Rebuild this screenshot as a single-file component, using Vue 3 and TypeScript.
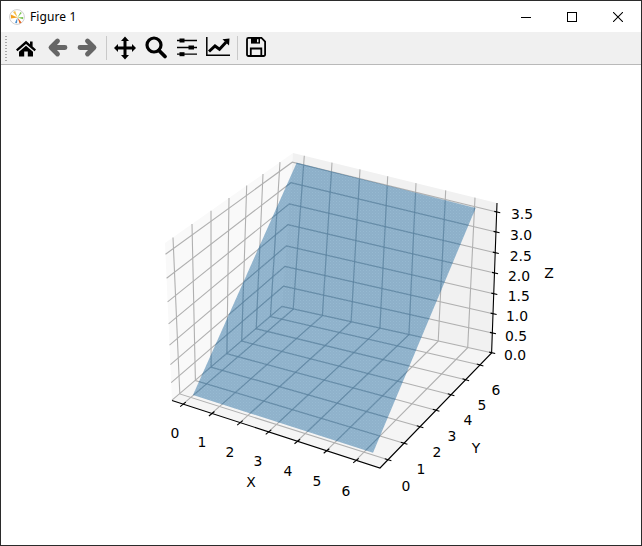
<script setup lang="ts">
type P = [number, number];
type Quad = [P, P, P, P];

// Projective map of the unit square onto a quad (corners: 00, 10, 11, 01).
function homography(q: Quad) {
  const [[x0, y0], [x1, y1], [x2, y2], [x3, y3]] = q;
  const dx1 = x1 - x2, dx2 = x3 - x2, sx = x0 - x1 + x2 - x3;
  const dy1 = y1 - y2, dy2 = y3 - y2, sy = y0 - y1 + y2 - y3;
  const den = dx1 * dy2 - dx2 * dy1;
  const g = (sx * dy2 - dx2 * sy) / den;
  const h = (dx1 * sy - sx * dy1) / den;
  return (u: number, v: number): P => {
    const w = g * u + h * v + 1;
    return [
      ((x1 - x0 + g * x1) * u + (x3 - x0 + h * x3) * v + x0) / w,
      ((y1 - y0 + g * y1) * u + (y3 - y0 + h * y3) * v + y0) / w,
    ];
  };
}

// Parameter along an edge whose chosen coordinate reaches the measured value.
function solve(fn: (t: number) => number, target: number) {
  let lo = 0, hi = 1;
  const rising = fn(1) > fn(0);
  for (let i = 0; i < 30; i++) {
    const mid = (lo + hi) / 2;
    if (fn(mid) < target === rising) lo = mid;
    else hi = mid;
  }
  return (lo + hi) / 2;
}

const L: P = [172, 400.5], F: P = [380, 468], R: P = [491.6, 353], B: P = [282, 306.7];
const LT: P = [165, 243], BT: P = [293, 153], RT: P = [497, 203];

const floor = homography([L, F, R, B]);
const back = homography([B, R, RT, BT]);
const side = homography([L, B, BT, LT]);

const xAxisTicks = [183, 211.7, 240, 268.5, 297.3, 326.5, 356];
const yAxisTicks = [388, 404, 420, 436, 451, 465.7, 480];
const zAxisTicks = [352.7, 333, 313.7, 293.7, 273, 252.7, 232, 212];
const xTopTicks = [304.3, 332, 360, 387.7, 416, 445.7, 475];
const yTopTicks = [173, 192, 211, 229, 246.7, 263, 280];

const us = xAxisTicks.map((x) => solve((t) => floor(t, 0)[0], x));
const vs = yAxisTicks.map((x) => solve((t) => floor(1, t)[0], x));
const ws = zAxisTicks.map((y) => solve((t) => back(1, t)[1], y));
const usTop = xTopTicks.map((x) => solve((t) => back(t, 1)[0], x));
const vsTop = yTopTicks.map((x) => solve((t) => side(t, 1)[0], x));

const pts = (...p: P[]) => p.map((a) => `${a[0].toFixed(1)},${a[1].toFixed(1)}`).join(" ");

const panes = [
  { id: "side", fill: "#f9f9f9", points: pts(L, B, BT, LT) },
  { id: "back", fill: "#f1f1f1", points: pts(B, R, RT, BT) },
  { id: "floor", fill: "#f5f5f5", points: pts(L, F, R, B) },
];

const grid: string[] = [];
us.forEach((u, i) => {
  const mid = floor(u, 1);
  grid.push(pts(floor(u, 0), mid, back(usTop[i], 1)));
});
vs.forEach((v, i) => {
  const mid = floor(0, v);
  grid.push(pts(floor(1, v), mid, side(vsTop[i], 1)));
});
ws.forEach((w) => {
  const mid = back(0, w);
  grid.push(pts(back(1, w), mid, side(0, w)));
});

const surface = pts([193, 395], [373, 452.7], [475.7, 208], [296.7, 162.7]);
const axisLine = pts(L, F, R, RT);

const ticks: { x1: number; y1: number; x2: number; y2: number }[] = [];
us.forEach((u) => {
  const [x, y] = floor(u, 0);
  ticks.push({ x1: x - 2.8, y1: y + 2.6, x2: x + 2.8, y2: y - 1.9 });
});
vs.forEach((v) => {
  const [x, y] = floor(1, v);
  ticks.push({ x1: x - 3.2, y1: y - 1, x2: x + 3.4, y2: y + 1 });
});
ws.forEach((w) => {
  const [x, y] = back(1, w);
  ticks.push({ x1: x - 2.4, y1: y - 0.6, x2: x + 3.6, y2: y + 0.8 });
});

const labels: { t: string; x: number; y: number }[] = [
  ...[[175, 433], [202, 442], [230, 452], [258, 461], [288, 471], [317, 481], [346, 491]].map(
    ([x, y], i) => ({ t: String(i), x, y }),
  ),
  ...[[406, 486], [421, 469], [437, 452], [452, 436], [468, 420], [482, 405], [496, 390]].map(
    ([x, y], i) => ({ t: String(i), x, y }),
  ),
  ...[[515, 355], [516, 336], [517, 316], [518.7, 296], [519, 276], [520.7, 256], [521, 235], [522, 214]].map(
    ([x, y], i) => ({ t: (i * 0.5).toFixed(1), x, y }),
  ),
  { t: "X", x: 251, y: 482 },
  { t: "Y", x: 476, y: 448 },
  { t: "Z", x: 549, y: 273 },
];
</script>

<template>
  <div class="window">
    <header class="titlebar">
      <svg class="app-icon" width="16" height="16" viewBox="0 0 16 16">
        <circle cx="8" cy="8" r="7.400" fill="#fff" stroke="#cfcfcf" />
        <path d="M8.500 8.500 1.800 5.600 2 9.400Z" fill="#f2a020" />
        <path d="M8.500 8.500 4 3 6.200 2Z" fill="#f5c04a" />
        <path d="M8.500 8.500 12.600 13.400 10.600 14.400Z" fill="#e8641c" />
        <path d="M8.500 8.500 11.500 3 12.800 4Z" fill="#7cc552" />
        <path d="M8.500 8.500 14.200 8 14 10.200Z" fill="#7cc552" />
        <path d="M8.500 8.500 6 13.800 8 14.200Z" fill="#4a90d0" />
      </svg>
      <span class="title">Figure 1</span>
      <div class="controls">
        <button class="ctl" aria-label="Minimize">
          <svg width="10" height="10" viewBox="0 0 10 10"><path d="M0 5.500H10" stroke="#000" /></svg>
        </button>
        <button class="ctl" aria-label="Maximize">
          <svg width="10" height="10" viewBox="0 0 10 10"><rect x=".5" y=".5" width="9" height="9" fill="none" stroke="#000" /></svg>
        </button>
        <button class="ctl" aria-label="Close">
          <svg width="10" height="10" viewBox="0 0 10 10"><path d="M0 0 10 10M10 0 0 10" stroke="#000" stroke-width="1.050" /></svg>
        </button>
      </div>
    </header>

    <nav class="toolbar">
      <span class="grip"></span>
      <button class="tool" aria-label="Home">
        <svg width="24" height="24" viewBox="0 0 24 24">
          <path d="M12 4.700 2 13.400l1.500 1.900L12 8l8.500 7.300 1.500-1.900-3.400-3V5.400H16v2.800Z" />
          <path d="M5 15.700 12 9.700l7 6V20.500h-5.200v-5h-3.600v5H5Z" />
        </svg>
      </button>
      <button class="tool" aria-label="Back">
        <svg width="24" height="24" viewBox="0 0 24 24">
          <path class="arrow" d="M20 11.500H7M12.500 5 6 11.500l6.500 6.500" />
        </svg>
      </button>
      <button class="tool" aria-label="Forward">
        <svg width="24" height="24" viewBox="0 0 24 24">
          <path class="arrow" d="M4 11.500H17M11.500 5 18 11.500 11.500 18" />
        </svg>
      </button>
      <span class="sep"></span>
      <button class="tool" aria-label="Pan">
        <svg width="24" height="24" viewBox="0 0 24 24">
          <path d="M12 .5 16 5h-2.500v5.500H19V8l4 4-4 4v-2.500h-5.500V19H16l-4 4.500L8 19h2.500v-5.500H5V16l-4-4 4-4v2.500h5.500V5H8Z" />
        </svg>
      </button>
      <button class="tool" aria-label="Zoom">
        <svg width="24" height="24" viewBox="0 0 24 24">
          <circle cx="10" cy="9" r="7" fill="none" stroke="#000" stroke-width="3.200" />
          <path d="M15 14.500 21 20.500" stroke="#000" stroke-width="3.800" stroke-linecap="round" />
        </svg>
      </button>
      <button class="tool" aria-label="Subplots">
        <svg width="24" height="24" viewBox="0 0 24 24">
          <path d="M2 4.500H22M2 11.500H22M2 18.200H22" stroke="#000" stroke-width="1.300" />
          <rect x="4.500" y="2.500" width="5" height="4" />
          <rect x="13.500" y="9.500" width="5.500" height="4" />
          <rect x="4.500" y="16.200" width="5" height="4" />
        </svg>
      </button>
      <button class="tool" aria-label="Axes">
        <svg width="24" height="24" viewBox="0 0 24 24">
          <path d="M.8 1V19.200H24" fill="none" stroke="#000" stroke-width="1.500" />
          <path d="M3 15.500 9 10l4.500 3.200 6.500-7" fill="none" stroke="#000" stroke-width="3" />
          <path d="M16.500 3.200 23.500 2.500 23 9.500Z" />
        </svg>
      </button>
      <span class="sep"></span>
      <button class="tool" aria-label="Save">
        <svg width="24" height="24" viewBox="0 0 24 24">
          <path d="M4.500 1.900H17.500L21.100 5.500V18.500a1.500 1.500 0 0 1-1.500 1.500H4.500A1.500 1.500 0 0 1 3 18.500V3.400a1.500 1.500 0 0 1 1.500-1.500Z" fill="none" stroke="#000" stroke-width="1.800" />
          <path d="M7 2H16V7.600H7Z" />
          <path d="M13 3.200h1.500v3H13Z" fill="#f0f0f0" />
          <path d="M6.800 19.500V12.500H17.300V19.500" fill="none" stroke="#000" stroke-width="1.800" />
        </svg>
      </button>
    </nav>

    <main class="canvas">
      <svg class="plot" width="640" height="480" viewBox="1 65 640 480">
        <defs>
          <pattern id="dither" width="3" height="3" patternUnits="userSpaceOnUse">
            <rect x="0" y="0" width="1" height="1" fill="#a6c6dc" fill-opacity=".4" />
            <rect x="1.500" y="1.500" width="1" height="1" fill="#a6c6dc" fill-opacity=".3" />
          </pattern>
          <clipPath id="surface-clip">
            <polygon :points="surface" />
          </clipPath>
        </defs>
        <polygon v-for="p in panes" :key="p.id" :points="p.points" :fill="p.fill" />
        <polyline v-for="(g, i) in grid" :key="i" :points="g" class="gridline" />
        <polygon :points="surface" class="surface" />
        <polygon :points="surface" fill="url(#dither)" />
        <g clip-path="url(#surface-clip)">
          <polyline v-for="(g, i) in grid" :key="i" :points="g" class="gridline-through" />
        </g>
        <polyline :points="axisLine" class="axis" />
        <line v-for="(t, i) in ticks" :key="i" :x1="t.x1" :y1="t.y1" :x2="t.x2" :y2="t.y2" class="tick" />
        <text v-for="(l, i) in labels" :key="i" :x="l.x" :y="l.y + 5" class="label">{{ l.t }}</text>
      </svg>
    </main>
  </div>
</template>

<style scoped>
.window {
  width: 642px;
  height: 546px;
  box-sizing: border-box;
  border: 1px solid #2b2b2b;
  background: #fff;
  display: flex;
  flex-direction: column;
  overflow: hidden;
}
.titlebar {
  height: 31px;
  display: flex;
  align-items: center;
  background: #fff;
  flex: none;
}
.app-icon {
  margin-left: 8px;
  flex: none;
}
.title {
  margin-left: 5px;
  font: 12px "Noto Sans", "Open Sans", sans-serif;
  letter-spacing: 0.1px;
  color: #000;
}
.controls {
  margin-left: auto;
  display: flex;
  height: 100%;
}
.ctl {
  width: 46px;
  border: 0;
  padding: 0;
  background: transparent;
  display: flex;
  align-items: center;
  justify-content: center;
}
.toolbar {
  height: 32px;
  flex: none;
  display: flex;
  align-items: center;
  background: #f0f0f0;
  border-bottom: 1px solid #b9b9b9;
  box-sizing: content-box;
}
.grip {
  width: 2px;
  height: 25px;
  margin: 0 3px 0 4px;
  background: repeating-linear-gradient(#a8a8a8 0 1px, transparent 1px 3px);
}
.tool {
  width: 31px;
  height: 100%;
  border: 0;
  padding: 0;
  background: transparent;
  display: flex;
  align-items: center;
  justify-content: center;
}
.sep {
  width: 1px;
  height: 24px;
  margin: 0 2.5px 0 3px;
  background: #c9c9c9;
}
.arrow {
  fill: none;
  stroke: #666;
  stroke-width: 4.800;
  stroke-linecap: round;
  stroke-linejoin: round;
}
.canvas {
  flex: 1;
  min-height: 0;
  background: #fff;
}
.plot {
  display: block;
}
.gridline {
  fill: none;
  stroke: #b0b0b0;
  stroke-width: 1.1;
}
.gridline-through {
  fill: none;
  stroke: #4f7a99;
  stroke-opacity: 0.42;
  stroke-width: 1.2;
}
.surface {
  fill: rgb(84, 140, 178);
  fill-opacity: 0.64;
}
.axis {
  fill: none;
  stroke: #000;
  stroke-width: 1.1;
}
.tick {
  stroke: #000;
  stroke-width: 1.1;
}
.label {
  font: 13.9px "DejaVu Sans", sans-serif;
  text-anchor: middle;
  fill: #000;
}
</style>
